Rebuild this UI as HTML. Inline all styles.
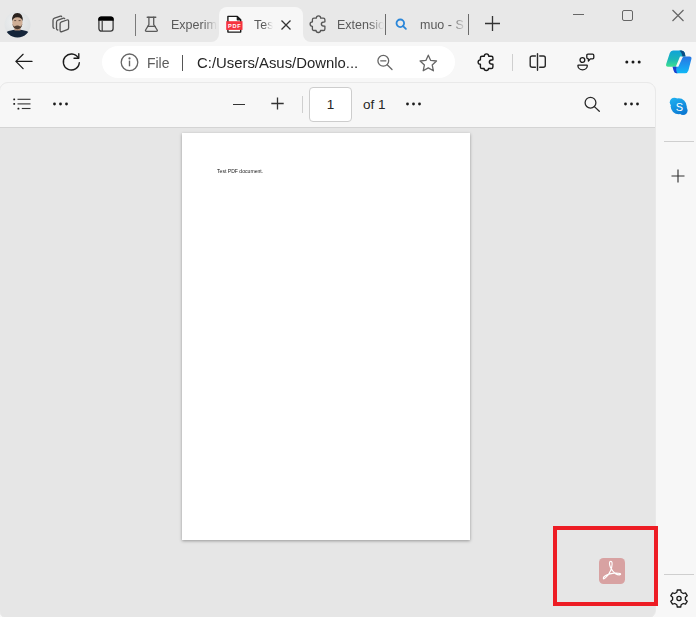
<!DOCTYPE html>
<html><head><meta charset="utf-8">
<style>
*{margin:0;padding:0;box-sizing:border-box}
html,body{width:696px;height:617px;overflow:hidden;background:#e8e8e8;font-family:"Liberation Sans",sans-serif;position:relative}
.abs{position:absolute}
svg{position:absolute;overflow:visible}
.tabtxt{position:absolute;font-size:12.5px;color:#5a5a5a;white-space:nowrap;overflow:hidden;top:18px;line-height:14px}
#toolbar{left:0;top:42px;width:696px;height:575px;background:#f7f7f7}
#addr{left:102px;top:46px;width:353px;height:32px;border-radius:16px;background:#fff}
#side{left:655px;top:82px;width:41px;height:535px;background:#f7f7f7}
#web{left:-1px;top:82px;width:657px;height:537px;border-radius:9px;border:1px solid #e9e9e9;overflow:hidden;background:#e6e6e6}
#pdfbar{left:0;top:0;width:656px;height:45px;background:#f7f7f7;border-bottom:1px solid #d4d4d4}
#page{left:182px;top:50px;width:288px;height:407px;background:#fff;box-shadow:0 1px 3px rgba(0,0,0,.35)}
</style></head><body>

<!-- tab strip -->
<div class="abs" id="tab-active" style="left:219px;top:7px;width:84px;height:36px;background:#f7f7f7;border-radius:8px 8px 0 0"></div>

<div class="abs" style="left:211px;top:34px;width:100px;height:8px;background:#f7f7f7"></div>
<div class="abs" style="left:203px;top:26px;width:16px;height:16px;background:#e8e8e8;border-radius:0 0 8px 0"></div>
<div class="abs" style="left:303px;top:26px;width:16px;height:16px;background:#e8e8e8;border-radius:0 0 0 8px"></div>
<!-- avatar -->
<svg style="left:4px;top:11px" width="27" height="27" viewBox="0 0 27 27">
  <defs><clipPath id="cc"><circle cx="13.5" cy="13.5" r="13"/></clipPath>
  <radialGradient id="avbg" cx=".4" cy=".4" r=".7"><stop offset="0" stop-color="#eef0f1"/><stop offset="1" stop-color="#d9dcde"/></radialGradient></defs>
  <g clip-path="url(#cc)">
    <rect width="27" height="27" fill="url(#avbg)"/>
    <path d="M0 27 L1.5 21.5 Q4 19.5 9 19 L13.5 18.6 L18 19 Q23 19.5 25.5 21.5 L27 27Z" fill="#15253a"/>
    <rect x="10.5" y="15" width="6" height="4.5" fill="#b8927a"/>
    <ellipse cx="13.4" cy="11.5" rx="5.1" ry="6.6" fill="#cfae96"/>
    <path d="M8.1 10.5 Q7.5 2 13.4 2 Q19.3 2 18.7 10.5 Q18 6.5 13.4 6.3 Q8.8 6.5 8.1 10.5Z" fill="#2a221e"/>
    <path d="M8.4 12.5 Q8.9 18.2 13.4 18.2 Q17.9 18.2 18.4 12.5 Q17.6 15.6 16.2 15.6 Q15 14.6 13.4 14.6 Q11.8 14.6 10.6 15.6 Q9.2 15.6 8.4 12.5Z" fill="#3b2d26" opacity=".9"/>
    <path d="M10.2 9.6 H12.2 M14.6 9.6 H16.6" stroke="#4a3a30" stroke-width=".8"/>
  </g>
</svg>

<!-- collections icon -->
<svg style="left:48px;top:12px" width="26" height="24" viewBox="0 0 26 24" fill="none" stroke="#555" stroke-width="1.3" stroke-linejoin="round" stroke-linecap="round">
  <path d="M6 16.3 Q5 16.1 5 14.8 V8.2 Q5 6.7 6.5 6.2 L12.5 4.1 Q13.5 3.9 13.6 4.6"/>
  <path d="M9.8 18 Q8.5 17.8 8.5 16.4 V10.2 Q8.5 8.7 10 8.2 L15.6 6.2 Q16.6 6 16.7 6.7"/>
  <path d="M12.1 11.8 Q12.1 10.4 13.5 9.9 L19 8 Q20.6 7.5 20.6 9.2 V16.1 Q20.6 17.3 19.3 17.7 L14 19.6 Q12.1 20.2 12.1 18.5 Z"/>
</svg>

<!-- vertical tabs icon -->
<svg style="left:98px;top:16px" width="16" height="16" viewBox="0 0 16 16">
  <rect x="0.9" y="1.2" width="14.2" height="14" rx="2.6" fill="none" stroke="#3a3a3a" stroke-width="1.3"/>
  <path d="M0.3 4.8 V3.2 Q0.3 0.5 3 0.5 H13 Q15.7 0.5 15.7 3.2 V4.8 Z" fill="#000"/>
  <line x1="4.2" y1="4" x2="4.2" y2="15" stroke="#3a3a3a" stroke-width="1.2"/>
</svg>

<div class="abs" style="left:135px;top:14px;width:1px;height:22px;background:#7a7a7a"></div>

<!-- beaker -->
<svg style="left:144px;top:16px" width="16" height="17" viewBox="0 0 16 17" fill="none" stroke="#5a5a5a" stroke-width="1.3" stroke-linejoin="round" stroke-linecap="round">
  <path d="M3.2 1.25 H11.8"/>
  <path d="M4.9 1.25 V8.6 L1.6 14 Q1 15.3 2.5 15.3 H12.3 Q13.8 15.3 13.2 14 L9.7 8.6 V1.25"/>
  <path d="M3.6 10.4 H11.2"/>
</svg>
<div class="tabtxt" style="left:171px;width:46px;-webkit-mask-image:linear-gradient(90deg,#000 70%,transparent)">Experim</div>

<!-- PDF icon in tab -->
<svg style="left:226px;top:15px" width="17" height="18" viewBox="0 0 17 18">
  <path d="M1.9 1.4 H11.3 L14.7 4.8 V17.1 H1.9 Z" fill="#fff" stroke="#1a1a1a" stroke-width="1.4" stroke-linejoin="round"/>
  <path d="M11.3 1.4 V4.8 H14.7" fill="#1a1a1a" stroke="#1a1a1a" stroke-width="1.2" stroke-linejoin="round"/>
  <rect x="0.2" y="6.2" width="16.3" height="8.7" fill="#f5333f"/>
  <text x="8.7" y="12.8" font-size="5.6" font-weight="bold" fill="#fff" text-anchor="middle" letter-spacing=".7" font-family="Liberation Sans">PDF</text>
</svg>
<div class="tabtxt" style="left:254px;width:19px;-webkit-mask-image:linear-gradient(90deg,#000 55%,transparent)">Tes</div>
<svg style="left:281px;top:20px" width="10" height="10" viewBox="0 0 10 10" stroke="#333" stroke-width="1.3"><path d="M0.5 0.5 L9.5 9.5 M9.5 0.5 L0.5 9.5"/></svg>

<!-- extension tab -->
<svg style="left:308px;top:14px" width="20" height="20" viewBox="0 0 20 20" fill="none" stroke="#555" stroke-width="1.3" stroke-linejoin="round">
  <path d="M4.4 5.8 Q4.4 4.2 6 4.2 H8.3 Q8.3 1.9 10.5 1.9 Q12.7 1.9 12.7 4.2 H15.3 Q16.9 4.2 16.9 5.8 V7.8 Q13.3 7.8 13.3 10 Q13.3 12.2 16.9 12.2 V14.9 Q16.9 16.5 15.3 16.5 H12.5 Q12.5 18.5 10.3 18.5 Q8.1 18.5 8.1 16.5 H6 Q4.4 16.5 4.4 14.9 V12.3 Q2.1 12.3 2.1 10.1 Q2.1 7.9 4.4 7.9 Z"/>
</svg>
<div class="tabtxt" style="left:337px;width:47px;-webkit-mask-image:linear-gradient(90deg,#000 70%,transparent)">Extensio</div>
<div class="abs" style="left:385px;top:14px;width:1px;height:21px;background:#6a6a6a"></div>

<!-- search tab -->
<svg style="left:395px;top:19px" width="13" height="12" viewBox="0 0 13 12" fill="none" stroke="#2a86d9" stroke-width="1.8">
  <circle cx="5.3" cy="4.3" r="3.8"/><path d="M8.1 7.1 L10.9 9.9" stroke-linecap="round"/>
</svg>
<div class="tabtxt" style="left:420px;width:46px;-webkit-mask-image:linear-gradient(90deg,#000 70%,transparent)">muo - S</div>
<div class="abs" style="left:468px;top:14px;width:1px;height:21px;background:#6a6a6a"></div>

<!-- new tab plus -->
<svg style="left:485px;top:16px" width="15" height="15" viewBox="0 0 15 15" stroke="#333" stroke-width="1.3"><path d="M7.5 0 V15 M0 7.5 H15"/></svg>

<!-- window controls -->
<div class="abs" style="left:573px;top:14px;width:11px;height:1px;background:#666"></div>
<div class="abs" style="left:622px;top:10px;width:11px;height:11px;border:1.2px solid #666;border-radius:2px"></div>
<svg style="left:672px;top:10px" width="12" height="11" viewBox="0 0 12 11" stroke="#666" stroke-width="1.2"><path d="M0.5 0 L11.5 11 M11.5 0 L0.5 11"/></svg>

<!-- toolbar -->
<div class="abs" id="toolbar"></div>
<div class="abs" id="addr"></div>

<svg style="left:15px;top:53px" width="18" height="17" viewBox="0 0 18 17" fill="none" stroke="#1a1a1a" stroke-width="1.25" stroke-linecap="round" stroke-linejoin="round">
  <path d="M17 8.4 H0.9 M8.1 1.3 L0.9 8.4 L8.1 15.6"/>
</svg>
<svg style="left:62px;top:53px" width="19" height="19" viewBox="0 0 19 19" fill="none" stroke="#1a1a1a" stroke-width="1.35" stroke-linecap="round" stroke-linejoin="round">
  <path d="M17.3 9.6 A8 8 0 1 1 16.2 4.9"/>
  <path d="M16.8 0.7 V5.2 H12"/>
</svg>

<svg style="left:120px;top:53px" width="19" height="19" viewBox="0 0 19 19" fill="none" stroke="#666" stroke-width="1.3">
  <circle cx="9.5" cy="9.3" r="8.3"/><path d="M9.5 7.6 V13.3" stroke-width="1.4"/><circle cx="9.5" cy="5.4" r="0.5" fill="#666" stroke-width="1.2"/>
</svg>
<div class="abs" style="left:147px;top:53.5px;font-size:15.5px;color:#5c5c5c;line-height:18px;transform:scaleX(.9);transform-origin:0 0">File</div>
<div class="abs" style="left:182px;top:55px;width:1.2px;height:16px;background:#555"></div>
<div class="abs" style="left:196.5px;top:53.5px;font-size:15.5px;color:#262626;line-height:18px;white-space:nowrap;transform:scaleX(.96);transform-origin:0 0">C:/Users/Asus/Downlo...</div>

<svg style="left:377px;top:55px" width="16" height="15" viewBox="0 0 16 15" fill="none" stroke="#666" stroke-width="1.3" stroke-linecap="round">
  <circle cx="6.3" cy="5.8" r="5.4"/><path d="M3.7 5.8 H8.9 M10.2 9.8 L15 14.5"/>
</svg>
<svg style="left:418.5px;top:53.6px" width="19" height="19" viewBox="0 0 19 19" fill="none" stroke="#666" stroke-width="1.3" stroke-linejoin="round">
  <path d="M9.3 1.2 L11.7 6.4 L17.5 7 L13.2 10.9 L14.4 16.8 L9.3 13.9 L4.2 16.8 L5.4 10.9 L1.1 7 L6.9 6.4 Z"/>
</svg>

<!-- extension puzzle toolbar -->
<svg style="left:476px;top:52px" width="20" height="20" viewBox="0 0 20 20" fill="none" stroke="#1a1a1a" stroke-width="1.4" stroke-linejoin="round">
  <path d="M4.4 5.8 Q4.4 4.2 6 4.2 H8.3 Q8.3 1.9 10.5 1.9 Q12.7 1.9 12.7 4.2 H15.3 Q16.9 4.2 16.9 5.8 V7.8 Q13.3 7.8 13.3 10 Q13.3 12.2 16.9 12.2 V14.9 Q16.9 16.5 15.3 16.5 H12.5 Q12.5 18.5 10.3 18.5 Q8.1 18.5 8.1 16.5 H6 Q4.4 16.5 4.4 14.9 V12.3 Q2.1 12.3 2.1 10.1 Q2.1 7.9 4.4 7.9 Z"/>
</svg>
<div class="abs" style="left:512px;top:54px;width:1px;height:17px;background:#cfcfcf"></div>
<!-- split screen -->
<svg style="left:529px;top:53px" width="18" height="18" viewBox="0 0 18 18" fill="none" stroke="#2a2a2a" stroke-width="1.4" stroke-linejoin="round" stroke-linecap="round">
  <path d="M6.4 3 H3.2 Q1.2 3 1.2 5 V12.3 Q1.2 14.3 3.2 14.3 H6.4"/>
  <path d="M10.7 3 H14.3 Q16.3 3 16.3 5 V12.3 Q16.3 14.3 14.3 14.3 H10.7"/>
  <path d="M8.5 0.7 V17.3"/>
</svg>
<!-- feedback -->
<svg style="left:576px;top:53px" width="20" height="18" viewBox="0 0 20 18" fill="none" stroke="#1a1a1a" stroke-width="1.3" stroke-linejoin="round" stroke-linecap="round">
  <circle cx="6.4" cy="7" r="2.4"/>
  <path d="M1.9 12.7 Q1.9 12.2 2.4 12.2 H10.8 Q11.3 12.2 11.3 12.7 A4.7 4.1 0 0 1 1.9 12.7 Z"/>
  <path d="M12 1.2 H16.6 Q17.8 1.2 17.8 2.4 V4.6 Q17.8 5.8 16.6 5.8 H14.3 L12.4 8.1 V5.8 Q10.8 5.8 10.8 4.6 V2.4 Q10.8 1.2 12 1.2 Z"/>
</svg>
<!-- dots -->
<svg style="left:625px;top:60px" width="16" height="4" viewBox="0 0 16 4" fill="#1a1a1a"><circle cx="1.8" cy="2" r="1.5"/><circle cx="8" cy="2" r="1.5"/><circle cx="14.2" cy="2" r="1.5"/></svg>
<!-- copilot -->
<svg style="left:660px;top:46px" width="36" height="32" viewBox="0 0 36 32">
  <defs>
    <linearGradient id="cpA" x1="0" y1="0" x2="0" y2="1"><stop offset="0" stop-color="#0fa3da"/><stop offset=".55" stop-color="#1cb6b8"/><stop offset="1" stop-color="#3fe08f"/></linearGradient>
    <linearGradient id="cpB" x1="0" y1="0" x2="0" y2="1"><stop offset="0" stop-color="#2a74e2"/><stop offset=".6" stop-color="#1a9cf0"/><stop offset="1" stop-color="#10b8f5"/></linearGradient>
  </defs>
  <path d="M13 4.4 H21.5 Q24 4.4 24.8 7 L25.5 10.4 H20 L15.8 20.7 H8 Q5.5 20.7 6.2 18 L9.8 7 Q10.7 4.4 13 4.4 Z" fill="url(#cpA)"/>
  <path d="M19.5 4.4 H21.5 Q24 4.4 24.8 7 L25.5 10.4 H22.5 Q21.5 6 19.5 4.4 Z" fill="#0d4d84"/>
  <path d="M25 10.4 H29.5 Q32 10.4 31.4 13 L28.4 24.5 Q27.6 27.2 25 27.2 H17 Q14.5 27.2 14 25 L13.2 20.7 H18.3 L22.6 11.6 Q23.3 10.4 25 10.4 Z" fill="url(#cpB)"/>
  <path d="M12.5 20.7 H16.5 Q15.5 25 17.5 27.2 H16.5 Q14.5 27.2 13.8 25 Z" fill="#1d3fcf"/>
</svg>

<!-- sidebar -->
<div class="abs" id="side"></div>

<!-- webview -->
<div class="abs" id="web">
  <div class="abs" id="pdfbar"></div>
  <div class="abs" id="page">
    <div class="abs" style="left:35px;top:35px;font-size:5.1px;color:#1a1a1a;white-space:nowrap;line-height:6px;filter:blur(.25px)">Test PDF document.</div>
  </div>
</div>

<!-- pdf toolbar icons -->
<svg style="left:13px;top:98px" width="18" height="12" viewBox="0 0 18 12" fill="#1a1a1a">
  <rect x="0.3" y="0.5" width="1.8" height="1.7" rx=".5"/><rect x="4.5" y="0.75" width="13" height="1.1" fill="#333"/>
  <rect x="0.3" y="5.1" width="1.8" height="1.7" rx=".5"/><rect x="4.5" y="5.35" width="13" height="1.1" fill="#333"/>
  <rect x="4.5" y="9.7" width="1.8" height="1.7" rx=".5"/><rect x="8.8" y="9.95" width="8.7" height="1.1" fill="#333"/>
</svg>
<svg style="left:53px;top:102px" width="15" height="4" viewBox="0 0 15 4" fill="#1a1a1a"><circle cx="1.5" cy="2" r="1.4"/><circle cx="7.5" cy="2" r="1.4"/><circle cx="13.5" cy="2" r="1.4"/></svg>

<div class="abs" style="left:233px;top:103.5px;width:12px;height:1.3px;background:#333"></div>
<svg style="left:271px;top:97px" width="13" height="13" viewBox="0 0 13 13" stroke="#333" stroke-width="1.3"><path d="M6.5 0.5 V12.5 M0.3 6.5 H12.7"/></svg>
<div class="abs" style="left:302px;top:96px;width:1px;height:17px;background:#cfcfcf"></div>
<div class="abs" style="left:309px;top:87px;width:43px;height:35px;background:#fff;border:1px solid #cdcdcd;border-radius:4px"></div>
<div class="abs" style="left:309px;top:97px;width:43px;text-align:center;font-size:13.5px;color:#262626;line-height:16px">1</div>
<div class="abs" style="left:363px;top:97px;font-size:13.5px;color:#262626;line-height:16px">of 1</div>
<svg style="left:406px;top:102px" width="15" height="4" viewBox="0 0 15 4" fill="#1a1a1a"><circle cx="1.5" cy="2" r="1.4"/><circle cx="7.5" cy="2" r="1.4"/><circle cx="13.5" cy="2" r="1.4"/></svg>

<svg style="left:584px;top:96px" width="17" height="17" viewBox="0 0 17 17" fill="none" stroke="#2a2a2a" stroke-width="1.3" stroke-linecap="round">
  <circle cx="6.5" cy="6.7" r="5.4"/><path d="M10.4 10.6 L15.3 15.2"/>
</svg>
<svg style="left:624px;top:102px" width="15" height="4" viewBox="0 0 15 4" fill="#1a1a1a"><circle cx="1.5" cy="2" r="1.4"/><circle cx="7.5" cy="2" r="1.4"/><circle cx="13.5" cy="2" r="1.4"/></svg>

<!-- sidebar icons -->
<svg style="left:668px;top:96px" width="22" height="21" viewBox="0 0 22 21">
  <defs><linearGradient id="sk" gradientUnits="userSpaceOnUse" x1="6" y1="1" x2="15" y2="20"><stop offset="0" stop-color="#1fb0f0"/><stop offset="1" stop-color="#0a74d0"/></linearGradient></defs>
  <g fill="url(#sk)"><circle cx="10.7" cy="10.3" r="8"/><circle cx="6.3" cy="6.2" r="4.5"/><circle cx="15.1" cy="14.5" r="4.5"/></g>
  <text x="11.4" y="14.6" font-size="11" fill="#fff" text-anchor="middle" font-family="Liberation Sans">S</text>
</svg>
<div class="abs" style="left:664px;top:141px;width:30px;height:1px;background:#cfcfcf"></div>
<svg style="left:671px;top:169px" width="14" height="14" viewBox="0 0 14 14" stroke="#333" stroke-width="1.15"><path d="M7 0.5 V13.5 M0.5 7 H13.5"/></svg>
<div class="abs" style="left:664px;top:573.5px;width:30px;height:1px;background:#cfcfcf"></div>
<svg style="left:669.8px;top:588.6px" width="18" height="19" viewBox="0 0 18 19" fill="none" stroke="#1a1a1a" stroke-width="1.3" stroke-linejoin="round">
  <path d="M7.3 1 H10.7 L11.2 3.3 L13.2 4.5 L15.5 3.8 L17.2 6.7 L15.4 8.3 V10.7 L17.2 12.3 L15.5 15.2 L13.2 14.5 L11.2 15.7 L10.7 18 H7.3 L6.8 15.7 L4.8 14.5 L2.5 15.2 L0.8 12.3 L2.6 10.7 V8.3 L0.8 6.7 L2.5 3.8 L4.8 4.5 L6.8 3.3 Z"/>
  <circle cx="9" cy="9.5" r="2.1"/>
</svg>

<!-- red highlight rect -->
<div class="abs" style="left:553px;top:526px;width:105px;height:80px;border:4px solid #ed1c24"></div>
<!-- acrobat icon -->
<svg style="left:599px;top:558px" width="26" height="26" viewBox="0 0 26 26">
  <rect width="26" height="26" rx="4.5" fill="#d8a2a2"/>
  <path d="M11.7 3.4 Q13.2 3.4 13.1 6.2 Q12.9 9.5 11.7 12.5 Q10 16.5 6.6 19.7 Q4.6 21.6 4.4 20.3 Q4.3 18.7 7.5 17.1 Q10.5 15.5 15 15.1 Q19 14.8 21 15.6 Q22.3 16.3 21 16.8 Q19 17.1 16.5 15.7 Q13.5 13.5 11.5 9.5 Q10.3 6.5 10.5 5 Q10.6 3.4 11.7 3.4 Z" fill="none" stroke="#fff" stroke-width="1.15" stroke-linejoin="round"/>
</svg>

</body></html>
